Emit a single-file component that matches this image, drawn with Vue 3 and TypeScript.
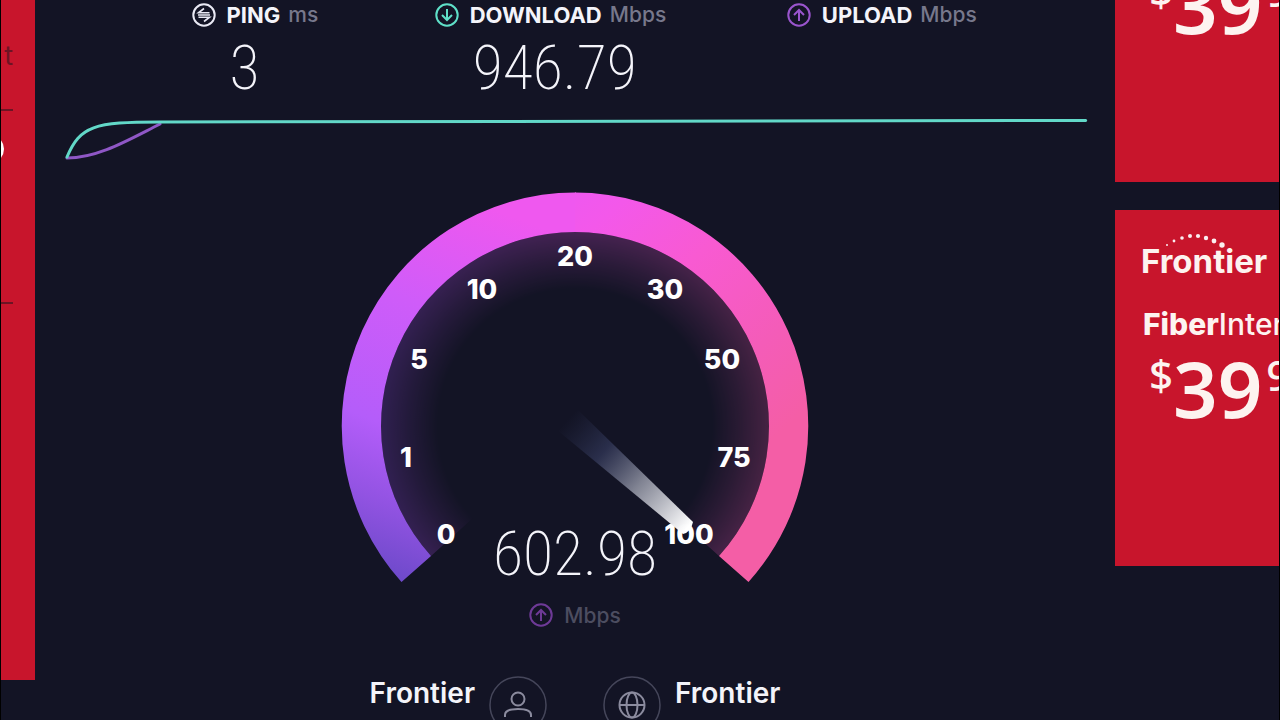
<script setup lang="ts">
interface Metric {
  id: string
  name: string
  unit: string
  value: string
}

interface Mark {
  label: string
  x: number
  y: number
}

interface Dot {
  x: number
  y: number
  r: number
}

const metrics: Metric[] = [
  { id: 'ping', name: 'PING', unit: 'ms', value: '3' },
  { id: 'download', name: 'DOWNLOAD', unit: 'Mbps', value: '946.79' },
  { id: 'upload', name: 'UPLOAD', unit: 'Mbps', value: '' },
]

const marks: Mark[] = [
  { label: '0', x: 105, y: 342 },
  { label: '1', x: 65, y: 265 },
  { label: '5', x: 78, y: 167 },
  { label: '10', x: 141, y: 97 },
  { label: '20', x: 234, y: 64 },
  { label: '30', x: 324, y: 97 },
  { label: '50', x: 381, y: 167 },
  { label: '75', x: 393, y: 265 },
  { label: '100', x: 348, y: 342 },
]

const dots: Dot[] = [
  { x: 26, y: 15, r: 1 },
  { x: 33, y: 11, r: 1.4 },
  { x: 41, y: 8, r: 1.8 },
  { x: 49, y: 6, r: 2 },
  { x: 57, y: 6, r: 2.1 },
  { x: 65, y: 8, r: 2.2 },
  { x: 73, y: 11, r: 2.4 },
  { x: 81, y: 15, r: 2.7 },
]

const offers: string[] = ['first', 'second']
</script>

<template>
  <div class="page">
    <aside class="side side-left">
      <div class="strip">
        <p class="strip-text">t</p>
        <hr class="rule" />
        <span class="pill"></span>
        <hr class="rule" />
      </div>
    </aside>

    <main class="test">
      <section class="metrics">
        <div v-for="m in metrics" :key="m.id" class="metric">
          <h2 class="metric-head">
            <svg v-if="m.id === 'ping'" class="icon" viewBox="0 0 24 24" fill="none" stroke="#e9e9f4" stroke-width="2">
              <circle cx="12" cy="12" r="10.7" />
              <path d="M17.500 9.800H6.500L12 5.500M6.500 14.200h11L12 18.500M6 12h12" stroke-width="1.600" />
            </svg>
            <svg v-else-if="m.id === 'download'" class="icon" viewBox="0 0 24 24" fill="none" stroke="#5fe0c8" stroke-width="2">
              <circle cx="12" cy="12" r="10.7" />
              <path d="M12 6v11M7 12l5 5 5-5" />
            </svg>
            <svg v-else class="icon" viewBox="0 0 24 24" fill="none" stroke="#9a55cd" stroke-width="2">
              <circle cx="12" cy="12" r="10.7" />
              <path d="M12 18V7M7 12l5-5 5 5" />
            </svg>
            <span class="name">{{ m.name }}</span>
            <span class="unit">{{ m.unit }}</span>
          </h2>
          <p class="value metric-value">{{ m.value }}</p>
        </div>
      </section>

      <svg class="chart" viewBox="0 0 1024 44" fill="none" stroke-width="3" stroke-linecap="round">
        <path d="M3 42C34 42 64 24 96 8" stroke="#8f57c6" />
        <path d="M3 41C16 10 30 6 96 6C220 5 520 4.500 1021 4.500" stroke="#62d8c8" />
      </svg>

      <section class="gauge">
        <svg class="dial" viewBox="0 0 468 392">
          <defs>
            <linearGradient id="arc-left" gradientUnits="userSpaceOnUse" x1="70" y1="390" x2="214" y2="10">
              <stop offset="0" stop-color="#6f4acb" />
              <stop offset=".16" stop-color="#9253e2" />
              <stop offset=".34" stop-color="#b45dfa" />
              <stop offset=".65" stop-color="#cf5cf9" />
              <stop offset=".93" stop-color="#ef58ef" />
              <stop offset="1" stop-color="#ef58ef" />
            </linearGradient>
            <linearGradient id="arc-right" gradientUnits="userSpaceOnUse" x1="234" y1="0" x2="440" y2="240">
              <stop offset="0" stop-color="#ef58ef" />
              <stop offset=".12" stop-color="#f358ea" />
              <stop offset=".4" stop-color="#f85ad2" />
              <stop offset=".75" stop-color="#f45cb8" />
              <stop offset="1" stop-color="#f45ea6" />
            </linearGradient>
            <linearGradient id="glow-tint" x1="0" y1="0" x2="1" y2="0">
              <stop offset="0" stop-color="#8a45d8" />
              <stop offset=".5" stop-color="#e050e0" />
              <stop offset="1" stop-color="#e0509c" />
            </linearGradient>
            <radialGradient id="glow-fade" gradientUnits="userSpaceOnUse" cx="234" cy="234" r="195">
              <stop offset=".7" stop-color="#000" />
              <stop offset=".85" stop-color="#3c3c3c" />
              <stop offset="1" stop-color="#808080" />
            </radialGradient>
            <mask id="glow-mask">
              <rect width="468" height="468" fill="url(#glow-fade)" />
            </mask>
            <linearGradient id="needle" gradientUnits="userSpaceOnUse" x1="226" y1="228" x2="346" y2="336">
              <stop offset="0" stop-color="#2a3050" stop-opacity="0" />
              <stop offset=".3" stop-color="#343a5c" stop-opacity=".7" />
              <stop offset=".6" stop-color="#8d909f" stop-opacity=".9" />
              <stop offset="1" stop-color="#fff" />
            </linearGradient>
          </defs>
          <path d="M234 234L90 364A194 194 0 1 1 378 364Z" fill="url(#glow-tint)" opacity=".5" mask="url(#glow-mask)" />
          <path d="M60.500 390A233.500 233.500 0 0 1 235 .5V40A194 194 0 0 0 90 364Z" fill="url(#arc-left)" />
          <path d="M234 .5A233.500 233.500 0 0 1 407.500 390L378 364A194 194 0 0 0 234 40Z" fill="url(#arc-right)" />
          <text v-for="k in marks" :key="k.label" class="mark" :x="k.x" :y="k.y" dy="10" text-anchor="middle">{{ k.label }}</text>
          <path d="M216 238L237 218L352 330Q350 340 342 342Z" fill="url(#needle)" />
        </svg>
        <p class="value reading">602.98</p>
      </section>

      <p class="reading-unit">
        <svg class="icon" viewBox="0 0 24 24" fill="none" stroke="#6e3a97" stroke-width="2">
          <circle cx="12" cy="12" r="10.7" />
          <path d="M12 18V7M7 12l5-5 5 5" />
        </svg>
        <span>Mbps</span>
      </p>

      <footer class="hosts">
        <div class="host host-client">
          <span class="host-name">Frontier</span>
          <svg class="badge" viewBox="0 0 58 58" fill="none" stroke="#8b8b9e" stroke-width="2">
            <circle cx="29" cy="29" r="28" stroke="#45465a" stroke-width="1.500" />
            <circle cx="29" cy="23" r="6.500" />
            <path d="M16 41v-2c0-4 4-6 13-6s13 2 13 6v2" />
          </svg>
        </div>
        <div class="host">
          <svg class="badge" viewBox="0 0 58 58" fill="none" stroke="#8b8b9e" stroke-width="2">
            <circle cx="29" cy="29" r="28" stroke="#45465a" stroke-width="1.500" />
            <circle cx="29" cy="29" r="12.500" />
            <ellipse cx="29" cy="29" rx="5.500" ry="12.500" />
            <path d="M16.500 29h25" />
          </svg>
          <span class="host-name">Frontier</span>
        </div>
      </footer>
    </main>

    <aside class="side side-right">
      <article v-for="o in offers" :key="o" class="offer">
        <div class="brand">
          <svg class="brand-dots" viewBox="0 0 128 20" fill="#fbeef0">
            <circle v-for="d in dots" :key="d.x" :cx="d.x" :cy="d.y - 2" :r="d.r" />
          </svg>
          <span class="brand-name">Frontier</span>
        </div>
        <p class="plan"><b>Fiber</b>Internet</p>
        <p class="price"><sup>$</sup>39<sup class="cents">99</sup></p>
      </article>
    </aside>
  </div>
</template>

<style scoped>
.page {
  display: flex;
  height: 100vh;
  overflow: hidden;
  background: #131425;
  color: #f4f4fa;
  font-family: Inter, "Open Sans", sans-serif;
  border: solid #000;
  border-width: 0 1px;
  box-sizing: border-box;
}

p,
h2 {
  margin: 0;
}

.side {
  flex: none;
  overflow: hidden;
}

.side-left {
  width: 34px;
}

.strip {
  display: flex;
  flex-direction: column;
  align-items: flex-end;
  box-sizing: border-box;
  height: 680px;
  padding: 40px 22px 0 0;
  background: #c8152c;
}

.strip-text {
  color: #6d1424;
  font-size: 27px;
  line-height: 32px;
}

.rule {
  width: 160px;
  height: 2px;
  margin: 37px 0 24px;
  border: 0;
  background: #6d1424;
}

.pill {
  width: 160px;
  height: 28px;
  margin-right: 9px;
  border-radius: 14px;
  background: #fff;
}

.pill + .rule {
  margin-top: 139px;
}

.test {
  flex: 1;
  min-width: 0;
}

.metrics {
  display: grid;
  grid-template-columns: 243fr 352fr 328fr;
  height: 116px;
  padding-left: 14.5%;
}

.metric-head {
  display: flex;
  align-items: center;
  height: 30px;
  font-size: 22px;
  line-height: 30px;
}

.icon {
  flex: none;
  width: 24px;
  height: 24px;
}

.name {
  margin-left: 11px;
  font-weight: 700;
}

.unit {
  margin-left: 8px;
  color: #77788c;
  font-size: 21px;
  font-weight: 500;
}

.value {
  font-family: "Roboto Condensed", "Liberation Sans Narrow", sans-serif;
  font-size: 62px;
  font-weight: 250;
  line-height: 76px;
}

.metric-value {
  padding-left: 38px;
}

.chart {
  display: block;
  width: auto;
  margin: 0 26px 0 29px;
}

.gauge {
  display: grid;
  justify-items: center;
  align-items: end;
  margin-top: 32px;
}

.dial {
  grid-area: 1 / 1;
  width: 468px;
  height: 392px;
}

.mark {
  fill: #fff;
  font-size: 27px;
  font-weight: 800;
}

.reading {
  grid-area: 1 / 1;
  line-height: 60px;
}

.reading-unit {
  display: flex;
  align-items: center;
  justify-content: center;
  gap: 11px;
  height: 30px;
  margin-top: 16px;
  color: #4c4d60;
  font-size: 21px;
  font-weight: 500;
}

.hosts {
  display: grid;
  grid-template-columns: 1fr 1fr;
  gap: 56px;
  margin-top: 46px;
}

.host {
  display: flex;
  gap: 14px;
}

.host-client {
  justify-content: flex-end;
}

.host-name {
  font-size: 28px;
  font-weight: 600;
  line-height: 34px;
}

.badge {
  flex: none;
  width: 58px;
  height: 58px;
}

.side-right {
  display: flex;
  flex-direction: column;
  gap: 28px;
  width: 164px;
}

.offer {
  flex: none;
  box-sizing: border-box;
  height: 356px;
  padding: 22px 0 0 26px;
  overflow: hidden;
  background: #c8152c;
  color: #fdf3f0;
  white-space: nowrap;
}

.offer:first-child {
  margin-top: -174px;
}

.brand {
  display: grid;
  height: 52px;
}

.brand-dots {
  grid-area: 1 / 1;
  width: 128px;
  height: 20px;
}

.brand-name {
  grid-area: 1 / 1;
  margin-top: 9px;
  font-size: 33px;
  font-weight: 700;
  line-height: 40px;
}

.plan {
  margin-top: 20px;
  padding-left: 2px;
  font-size: 30px;
  font-weight: 500;
  line-height: 40px;
}

.plan b {
  font-weight: 800;
}

.price {
  display: flex;
  margin-top: 4px;
  padding-left: 8px;
  font-family: "Noto Sans", sans-serif;
  font-size: 78px;
  font-weight: 600;
  line-height: 80px;
}

.price sup {
  font-size: 42px;
  font-weight: 500;
  line-height: 54px;
}

.price .cents {
  margin-left: 4px;
}
</style>

<style>
body {
  margin: 0;
  background: #131425;
}
</style>
